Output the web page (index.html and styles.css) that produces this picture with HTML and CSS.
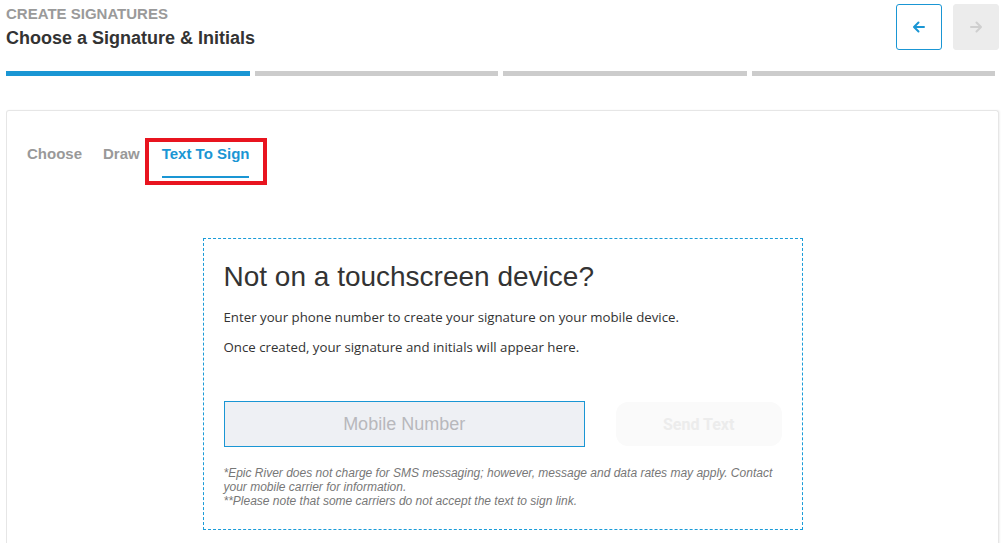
FILE: index.html
```html
<!DOCTYPE html>
<html>
<head>
<meta charset="utf-8">
<link rel="stylesheet" href="styles.css">
</head>
<body>
<div class="page">
  <header class="header">
    <div class="titles">
      <div class="eyebrow">CREATE SIGNATURES</div>
      <h1 class="title">Choose a Signature &amp; Initials</h1>
    </div>
    <div class="nav">
      <button class="nav-btn back" aria-label="Back">
        <svg width="14" height="14" viewBox="0 0 14 14"><path d="M12 7H2.5M6.5 2.5L2 7l4.5 4.5" fill="none" stroke="#1a96d4" stroke-width="2" stroke-linecap="round" stroke-linejoin="round"/></svg>
      </button>
      <button class="nav-btn next" aria-label="Next">
        <svg width="14" height="14" viewBox="0 0 14 14"><path d="M2 7h9.5M7.5 2.5L12 7l-4.5 4.5" fill="none" stroke="#cfcfcf" stroke-width="2" stroke-linecap="round" stroke-linejoin="round"/></svg>
      </button>
    </div>
  </header>
  <div class="progress">
    <span class="seg active"></span>
    <span class="seg"></span>
    <span class="seg"></span>
    <span class="seg"></span>
  </div>
  <section class="card">
    <nav class="tabs">
      <span class="tab">Choose</span>
      <span class="tab">Draw</span>
      <span class="tab current">Text To Sign<span class="highlight"></span></span>
    </nav>
    <div class="sms-box">
      <h2 class="sms-title">Not on a touchscreen device?</h2>
      <p class="sms-text">Enter your phone number to create your signature on your mobile device.</p>
      <p class="sms-text">Once created, your signature and initials will appear here.</p>
      <div class="sms-form">
        <input class="phone" type="text" placeholder="Mobile Number">
        <button class="send">Send Text</button>
      </div>
      <p class="note">*Epic River does not charge for SMS messaging; however, message and data rates may apply. Contact your mobile carrier for information.<br>**Please note that some carriers do not accept the text to sign link.</p>
    </div>
  </section>
</div>
</body>
</html>
```
FILE: styles.css
```css
* { box-sizing: border-box; }
html, body { margin: 0; padding: 0; background: #fff; }
body { font-family: "Liberation Sans", Arial, sans-serif; color: #333; }
.page { padding: 4px 3px 0 6px; }

.header { display: flex; justify-content: space-between; align-items: flex-start; height: 46px; }
.titles { padding-top: 1px; }
.eyebrow { font-size: 15px; font-weight: 700; color: #9a9a9a; line-height: 17px; }
.title { margin: 6px 0 0; font-size: 18px; font-weight: 700; color: #333; line-height: 21px; }
.nav { display: flex; gap: 11px; }
.nav-btn { width: 46px; height: 46px; border-radius: 3px; display: flex; align-items: center; justify-content: center; padding: 0; cursor: pointer; }
.nav-btn.back { background: #fff; border: 1px solid #1a96d4; }
.nav-btn.next { background: #ececec; border: 1px solid #ececec; }

.progress { display: flex; gap: 5px; margin: 21px 4px 0 0; }
.seg { flex: 1; height: 5px; background: #cccccc; }
.seg.active { background: #1a96d4; }

.card { margin-top: 34px; border: 1px solid #e6e6e6; border-bottom: none; border-radius: 3px 3px 0 0; box-shadow: 1px 0 2px rgba(0,0,0,0.06); padding: 34px 20px 0 20px; height: 440px; }
.tabs { display: flex; gap: 21px; }
.tab { position: relative; font-size: 15px; font-weight: 700; color: #999; line-height: 18px; padding-bottom: 15px; }
.tab.current { color: #1a96d4; border-bottom: 2px solid #1a96d4; padding-bottom: 13px; margin-left: 1px; }
.highlight { position: absolute; left: -17px; right: -18px; top: -7px; bottom: -9px; border: 4px solid #e8141f; }

.sms-box { width: 600px; margin: 60px auto 0; border: 1px dashed #1a9bd8; padding: 21px 20px 21px 20px; }
.sms-title { margin: 0 0 13px; font-size: 28px; font-weight: 400; line-height: 34px; color: #333; }
.sms-text { margin: 0 0 10px; font-family: "Open Sans", "Segoe UI", sans-serif; font-size: 13.25px; line-height: 20px; color: #333; }
.sms-form { display: flex; align-items: center; gap: 31px; margin-top: 44px; }
.phone { width: 362px; height: 46px; background: #eef0f4; border: 1px solid #1a96d4; font-family: "Liberation Sans", Arial, sans-serif; font-size: 18px; text-align: center; color: #333; outline: none; }
.phone::placeholder { color: #b8b8bc; }
.send { width: 166px; height: 44px; border: none; border-radius: 12px; background: #fafafa; font-family: Roboto, "Liberation Sans", sans-serif; font-weight: 700; font-size: 16px; color: #ececec; }
.note { margin: 19px 0 0; font-size: 12px; font-style: italic; color: #777; line-height: 14px; }
```
